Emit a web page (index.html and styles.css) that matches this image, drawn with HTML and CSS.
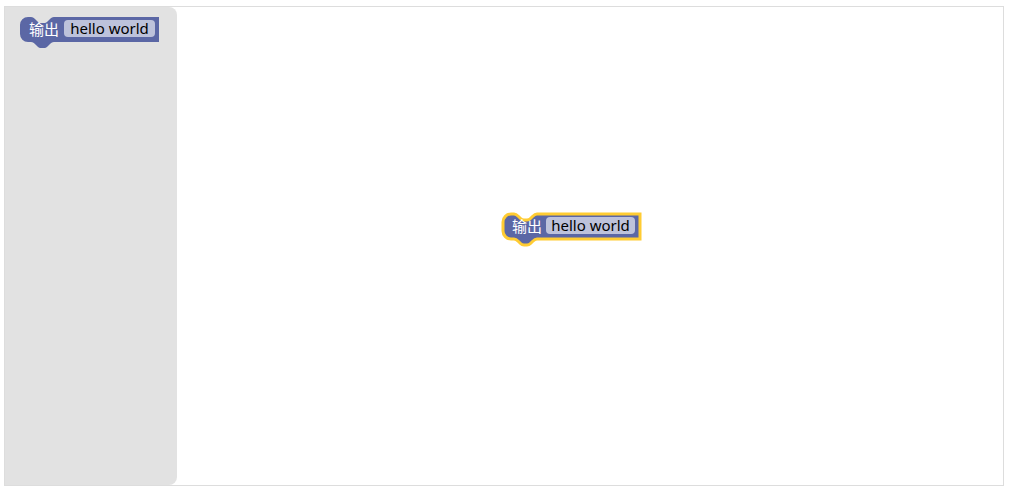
FILE: index.html
```html
<!DOCTYPE html>
<html>
<head>
<meta charset="utf-8">
<link rel="stylesheet" href="styles.css">
</head>
<body>
<div class="workspace">
  <aside class="flyout">
    <svg class="block" width="142" height="32" viewBox="0 0 142 32">
      <path class="block-body" d="M1,9 A8,8 0 0,1 9,1 H12 c2,0 3,1 4.5,2.5 l2,2 c1.2,1.2 2.3,1.5 3.5,1.5 h3 c1.2,0 2.3,-0.3 3.5,-1.5 l2,-2 c1.5,-1.5 2.5,-2.5 4.5,-2.5 H140 V26 H35 c-2,0 -3,1 -4.5,2.5 l-2,2 c-1.2,1.2 -2.3,1.5 -3.5,1.5 h-3 c-1.2,0 -2.3,-0.3 -3.5,-1.5 l-2,-2 c-1.5,-1.5 -2.5,-2.5 -4.5,-2.5 H9 A8,8 0 0,1 1,18 Z"/>
      <text class="label" x="10" y="18.5">输出</text>
      <rect class="field" x="45" y="4" width="91" height="17" rx="4" ry="4"/>
      <text class="field-text" x="90.5" y="17.5" text-anchor="middle">hello world</text>
    </svg>
  </aside>
  <main class="canvas">
    <svg class="block selected" width="146" height="36" viewBox="-2 -2 146 36">
      <path class="block-body" d="M1,9 A8,8 0 0,1 9,1 H12 c2,0 3,1 4.5,2.5 l2,2 c1.2,1.2 2.3,1.5 3.5,1.5 h3 c1.2,0 2.3,-0.3 3.5,-1.5 l2,-2 c1.5,-1.5 2.5,-2.5 4.5,-2.5 H138 V26 H35 c-2,0 -3,1 -4.5,2.5 l-2,2 c-1.2,1.2 -2.3,1.5 -3.5,1.5 h-3 c-1.2,0 -2.3,-0.3 -3.5,-1.5 l-2,-2 c-1.5,-1.5 -2.5,-2.5 -4.5,-2.5 H9 A8,8 0 0,1 1,18 Z"/>
      <text class="label" x="10" y="18.5">输出</text>
      <rect class="field" x="44" y="4" width="89" height="17" rx="4" ry="4"/>
      <text class="field-text" x="88.5" y="17.5" text-anchor="middle">hello world</text>
    </svg>
  </main>
</div>
</body>
</html>
```
FILE: styles.css
```css
html, body {
  margin: 0;
  padding: 0;
  background: #fff;
}
body {
  padding: 6px 0 0 4px;
  font-family: "Noto Sans", "Noto Sans CJK SC", sans-serif;
}
.workspace {
  width: 998px;
  height: 478px;
  border: 1px solid #dddddd;
  display: flex;
  position: relative;
  background: #fff;
}
.flyout {
  width: 172px;
  height: 100%;
  background: #e2e2e2;
  border-radius: 0 8px 8px 0;
  padding: 9px 0 0 14px;
  box-sizing: border-box;
}
.canvas {
  flex: 1;
  position: relative;
}
.block {
  display: block;
  overflow: visible;
}
.canvas .block {
  position: absolute;
  left: 323px;
  top: 204px;
}
.block-body {
  fill: #5b67a5;
}
.selected .block-body {
  stroke: #fc3;
  stroke-width: 3px;
}
.label {
  fill: #fff;
  font-family: "Noto Sans CJK SC", sans-serif;
  font-size: 15px;
}
.field {
  fill: #fff;
  fill-opacity: 0.6;
}
.field-text {
  fill: #000;
  font-family: "Noto Sans", sans-serif;
  font-size: 15px;
}
```
